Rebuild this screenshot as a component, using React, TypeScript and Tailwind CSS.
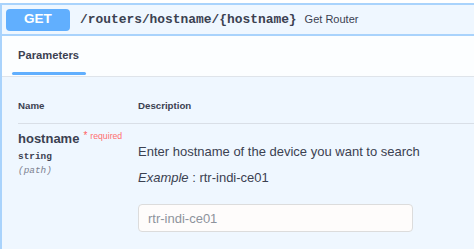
const sans = { fontFamily: '"Liberation Sans", Arial, sans-serif' };

function OpHeader() {
  return (
    <div className="flex h-[31px] items-center border-b-2 border-[#a9d3fc] pl-[4px]">
      <span className="flex h-[22px] w-[64px] items-center justify-center rounded-[4px] bg-[#61affe] text-[13.5px] font-bold text-white">GET</span>
      <span className="ml-[10px] font-['Liberation_Mono',monospace] text-[12.9px] font-bold text-[#3b4151]">/routers/hostname/&#123;hostname&#125;</span>
      <span className="ml-[8px] text-[11px] text-[#3b4151]">Get Router</span>
    </div>
  );
}

function Tabs() {
  return (
    <div className="flex h-[41px] items-end border-b border-[#dfe4ea] bg-[#fcfeff] pl-[10px]">
      <div className="flex flex-col">
        <span className="px-[6px] pb-[8px] text-[11.2px] font-bold text-[#3b4151]">Parameters</span>
        <span className="mb-[1px] h-[3px] w-[74px] rounded-full bg-[#61affe]" />
      </div>
    </div>
  );
}

export default function App() {
  return (
    <div className="h-[249px] w-[474px] overflow-hidden bg-white pt-[3px] text-[#3b4151]" style={sans}>
      <div className="h-full border-l-2 border-t-2 border-[#a9d3fc] bg-[#eff7ff]">
        <OpHeader />
        <Tabs />
        <div className="pl-[16px]">
          {/* table head */}
          <div className="flex h-[47px] items-end border-b border-[#d9dfe7] pb-[9px] text-[9.7px] font-bold">
            <span className="w-[120px]">Name</span>
            <span>Description</span>
          </div>
          {/* row */}
          <div className="flex">
            <div className="w-[120px] pt-[7px]">
              <div className="flex items-start">
                <span className="text-[13px] font-bold leading-[16px]">hostname</span>
                <span className="ml-[4px] text-[10px] leading-[10px] text-[#ff6060]">*</span>
                <span className="ml-[3px] text-[8.7px] leading-[10px] text-[#ff6f6f]">required</span>
              </div>
              <div className="mt-[3px] font-['Liberation_Mono',monospace] text-[9.4px] font-bold leading-[14px]">string</div>
              <div className="font-['Liberation_Mono',monospace] text-[9.4px] italic leading-[14px] text-[#7d8290]">(path)</div>
            </div>
            <div className="pt-[20px]">
              <p className="text-[13px] leading-[16px]">Enter hostname of the device you want to search</p>
              <p className="mt-[10px] text-[13px] leading-[16px]"><i>Example</i> : rtr-indi-ce01</p>
              <input
                readOnly
                placeholder="rtr-indi-ce01"
                className="mt-[18px] h-[28px] w-[275px] rounded-[4px] border border-[#dcdcdc] bg-[#fefcfb] px-[9px] text-[13px] text-[#3b4151] placeholder:text-[#8d939c]"
                style={sans}
              />
            </div>
          </div>
        </div>
      </div>
    </div>
  );
}
